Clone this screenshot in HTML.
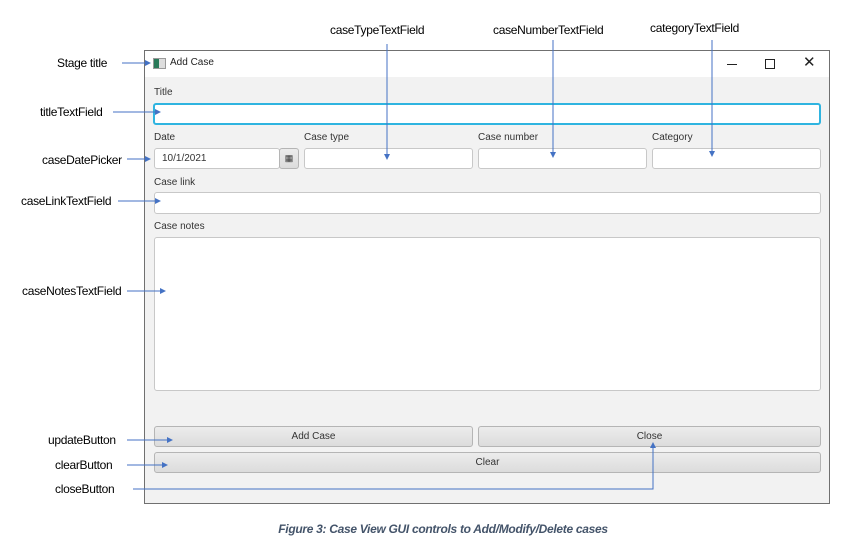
<!DOCTYPE html>
<html><head><style>
body{margin:0;width:856px;height:545px;background:#fff;position:relative;overflow:hidden;font-family:"Liberation Sans",sans-serif}
.a{position:absolute}
.lbl{font-size:12px;color:#000;letter-spacing:-0.3px}
.win{left:144px;top:50px;width:684px;height:452px;border:1px solid #707070;background:#f2f2f2}
.tb{left:0;top:0;width:684px;height:26px;background:#fff}
.fl{font-size:10px;color:#333}
.tf{background:#fff;border:1px solid #c8c8c8;border-radius:3px;box-sizing:border-box}
.btn{background:linear-gradient(#ececec,#dcdcdc);border:1px solid #b5b5b5;border-radius:3px;box-sizing:border-box;font-size:10px;color:#333;text-align:center;line-height:19px}
</style></head><body>
<div class="a win">
 <div class="a tb">
  <div class="a" style="left:8px;top:7px;width:11px;height:9px;border:1px solid #999;background:#ddd"><div style="width:5px;height:9px;background:#2a7a5a"></div></div>
  <div class="a" style="left:25px;top:6px;font-size:10px;color:#222">Add Case</div>
  <div class="a" style="left:582px;top:13px;width:10px;height:1px;background:#222"></div>
  <div class="a" style="left:620px;top:8px;width:8px;height:8px;border:1px solid #222"></div>
  <div class="a" style="left:658px;top:2px;font-size:15px;color:#222">✕</div>
 </div>
</div>
<div class="a fl" style="left:154px;top:87px">Title</div>
<div class="a tf" style="left:153px;top:103px;width:668px;height:22px;border:2px solid #2fb4e0"></div>
<div class="a fl" style="left:154px;top:132px">Date</div>
<div class="a fl" style="left:304px;top:132px">Case type</div>
<div class="a fl" style="left:478px;top:132px">Case number</div>
<div class="a fl" style="left:652px;top:132px">Category</div>
<div class="a tf" style="left:154px;top:148px;width:126px;height:21px;font-size:10px;color:#333;padding:4px 0 0 7px">10/1/2021</div>
<div class="a btn" style="left:279px;top:148px;width:20px;height:21px;line-height:18px;font-size:9px">▦</div>
<div class="a tf" style="left:304px;top:148px;width:169px;height:21px"></div>
<div class="a tf" style="left:478px;top:148px;width:169px;height:21px"></div>
<div class="a tf" style="left:652px;top:148px;width:169px;height:21px"></div>
<div class="a fl" style="left:154px;top:177px">Case link</div>
<div class="a tf" style="left:154px;top:192px;width:667px;height:22px"></div>
<div class="a fl" style="left:154px;top:221px">Case notes</div>
<div class="a tf" style="left:154px;top:237px;width:667px;height:154px"></div>
<div class="a btn" style="left:154px;top:426px;width:319px;height:21px">Add Case</div>
<div class="a btn" style="left:478px;top:426px;width:343px;height:21px">Close</div>
<div class="a btn" style="left:154px;top:452px;width:667px;height:21px">Clear</div>

<div class="a lbl" style="left:57px;top:56px">Stage title</div>
<div class="a lbl" style="left:40px;top:105px">titleTextField</div>
<div class="a lbl" style="left:42px;top:153px">caseDatePicker</div>
<div class="a lbl" style="left:21px;top:194px">caseLinkTextField</div>
<div class="a lbl" style="left:22px;top:284px">caseNotesTextField</div>
<div class="a lbl" style="left:48px;top:433px">updateButton</div>
<div class="a lbl" style="left:55px;top:458px">clearButton</div>
<div class="a lbl" style="left:55px;top:482px">closeButton</div>
<div class="a lbl" style="left:330px;top:23px">caseTypeTextField</div>
<div class="a lbl" style="left:493px;top:23px">caseNumberTextField</div>
<div class="a lbl" style="left:650px;top:21px">categoryTextField</div>
<div class="a" style="left:0;top:522px;width:886px;text-align:center;font-size:12px;font-style:italic;font-weight:bold;color:#44546a;letter-spacing:-0.3px">Figure 3: Case View GUI controls to Add/Modify/Delete cases</div>

<svg class="a" style="left:0;top:0" width="856" height="545">
<defs><marker id="m" markerWidth="6" markerHeight="6" refX="5" refY="3" orient="auto"><path d="M0,0 L6,3 L0,6z" fill="#4472c4"/></marker></defs>
<g stroke="#4472c4" stroke-width="1" fill="none" marker-end="url(#m)">
<path d="M122,63 H150"/><path d="M113,112 H160"/><path d="M127,159 H150"/><path d="M118,201 H160"/>
<path d="M127,291 H165"/><path d="M127,440 H172"/><path d="M127,465 H167"/>
<path d="M133,489 H653 V443"/>
<path d="M387,44 V159"/><path d="M553,40 V157"/><path d="M712,40 V156"/>
</g></svg>
</body></html>
